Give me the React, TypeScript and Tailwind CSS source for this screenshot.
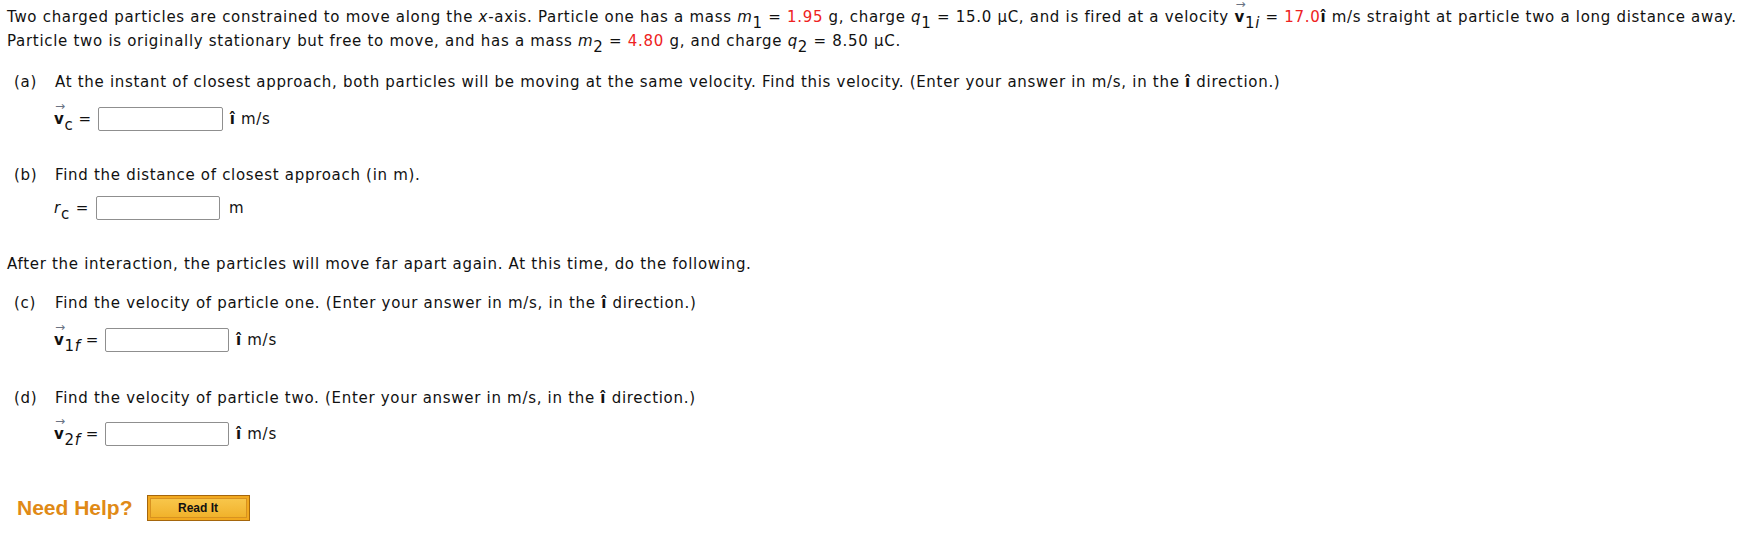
const font = { fontFamily: 'Verdana, "DejaVu Sans", sans-serif' };

function Sub({ children }: { children: React.ReactNode }) {
  return <span className="relative top-[6px] inline-block">{children}</span>;
}

function Vec({ sub }: { sub: React.ReactNode }) {
  return (
    <span className="whitespace-nowrap">
      <span className="relative inline-block font-bold">
        v
        <span className="absolute -top-[7px] left-[1px] text-[12px] font-normal leading-none text-gray-500">
          →
        </span>
      </span>
      <Sub>{sub}</Sub>
    </span>
  );
}

function Red({ children }: { children: React.ReactNode }) {
  return <span className="text-[#ee2222]">{children}</span>;
}

function Box({ w }: { w: string }) {
  return (
    <span
      className={`inline-block h-[24px] ${w} rounded-[2px] border border-[#8f8f8f] bg-white`}
    />
  );
}

function Part({ label, children }: { label: string; children: React.ReactNode }) {
  return (
    <div className="flex h-[24px] items-center pl-[7px]">
      <span className="w-[41px]">{label}</span>
      <span>{children}</span>
    </div>
  );
}

export default function App() {
  return (
    <div
      className="min-h-screen bg-white px-[7px] pt-[5px] text-[15px] leading-[24px] tracking-[0.7px] text-[#111]"
      style={font}
    >
      <p>
        Two charged particles are constrained to move along the <i>x</i>-axis. Particle one has a
        mass <i>m</i>
        <Sub>1</Sub> = <Red>1.95</Red> g, charge <i>q</i>
        <Sub>1</Sub> = 15.0 μC, and is fired at a velocity <Vec sub={<>1<i>i</i></>} /> ={' '}
        <Red>17.0</Red>
        <b>î</b> m/s straight at particle two a long distance away.
        <br />
        Particle two is originally stationary but free to move, and has a mass <i>m</i>
        <Sub>2</Sub> = <Red>4.80</Red> g, and charge <i>q</i>
        <Sub>2</Sub> = 8.50 μC.
      </p>

      <div className="mt-[17px]">
        <Part label="(a)">
          At the instant of closest approach, both particles will be moving at the same velocity.
          Find this velocity. (Enter your answer in m/s, in the <b>î</b> direction.)
        </Part>
      </div>
      <div className="mt-[13px] flex h-[24px] items-center pl-[47px]">
        <Vec sub="c" />
        <span className="ml-[5px] mr-[6px]">=</span>
        <Box w="w-[125px]" />
        <span className="ml-[7px]">
          <b>î</b> m/s
        </span>
      </div>

      <div className="mt-[32px]">
        <Part label="(b)">Find the distance of closest approach (in m).</Part>
      </div>
      <div className="mt-[9px] flex h-[24px] items-center pl-[47px]">
        <span>
          <i>r</i>
          <Sub>c</Sub>
        </span>
        <span className="ml-[6px] mr-[7px]">=</span>
        <Box w="w-[124px]" />
        <span className="ml-[9px]">m</span>
      </div>

      <p className="mt-[32px]">
        After the interaction, the particles will move far apart again. At this time, do the
        following.
      </p>

      <div className="mt-[15px]">
        <Part label="(c)">
          Find the velocity of particle one. (Enter your answer in m/s, in the <b>î</b> direction.)
        </Part>
      </div>
      <div className="mt-[13px] flex h-[24px] items-center pl-[47px]">
        <Vec sub={<>1<i>f</i></>} />
        <span className="ml-[5px] mr-[6px]">=</span>
        <Box w="w-[124px]" />
        <span className="ml-[7px]">
          <b>î</b> m/s
        </span>
      </div>

      <div className="mt-[34px]">
        <Part label="(d)">
          Find the velocity of particle two. (Enter your answer in m/s, in the <b>î</b> direction.)
        </Part>
      </div>
      <div className="mt-[12px] flex h-[24px] items-center pl-[47px]">
        <Vec sub={<>2<i>f</i></>} />
        <span className="ml-[5px] mr-[6px]">=</span>
        <Box w="w-[124px]" />
        <span className="ml-[7px]">
          <b>î</b> m/s
        </span>
      </div>

      <div className="mt-[49px] flex items-center pl-[10px] tracking-normal">
        <span className="font-['Liberation_Sans',Arial,sans-serif] text-[21px] font-bold text-[#e08a16]">
          Need Help?
        </span>
        <button className="ml-[14px] h-[26px] w-[103px] border border-[#a5660c] bg-[#f2a91f] p-[2px]">
          <span className="flex h-full w-full items-center justify-center border border-[#d89220] bg-gradient-to-b from-[#f8c64a] to-[#f1b22a] font-['Liberation_Sans',Arial,sans-serif] text-[12px] font-bold leading-none text-[#111]">
            Read It
          </span>
        </button>
      </div>
    </div>
  );
}
